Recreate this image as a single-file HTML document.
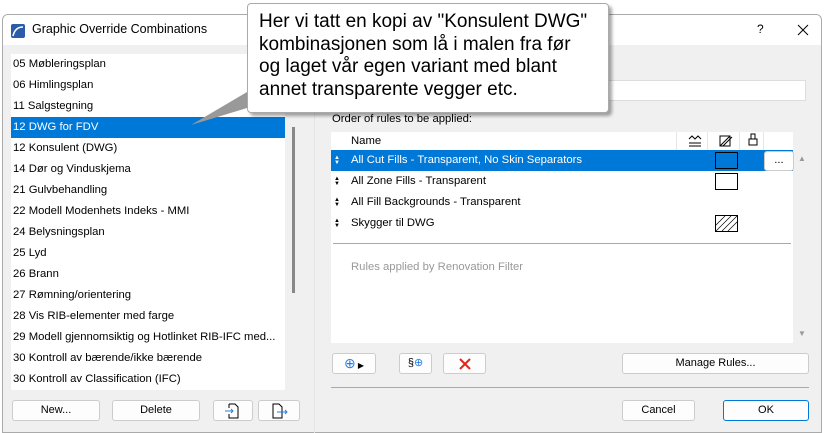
<!DOCTYPE html>
<html><head><meta charset="utf-8"><style>
*{box-sizing:border-box;margin:0;padding:0}
body{width:827px;height:433px;background:#fff;font-family:"Liberation Sans",sans-serif;font-size:11px;color:#000;position:relative;overflow:hidden}
.a{position:absolute}
.dlg{left:2px;top:14px;width:820px;height:419px;background:#f0f0f0;border:1px solid #aaa;border-radius:6px 6px 0 0;overflow:hidden}
.tb{left:0;top:0;width:820px;height:30px;background:#fff}
.li{position:absolute;left:0;width:274px;height:21px;line-height:21px;padding-left:2px;font-size:11.3px}
.sel{background:#0078d7;color:#fff}
.btn{position:absolute;background:#fdfdfd;border:1px solid #ccc;border-radius:3px;text-align:center;line-height:19px;font-size:11px}
.row{position:absolute;left:0;width:462px;height:21px;line-height:21px;font-size:11.3px}
.row .n{position:absolute;left:20px}
.row .ar{position:absolute;left:3px;font-size:6px;line-height:5px;top:6px}
</style></head><body>
<div class="a dlg">
 <div class="a tb"></div>
 <svg class="a" style="left:8px;top:9px" width="14" height="14"><rect width="14" height="14" rx="2" fill="#2a5caa"/><path d="M2 12 Q4 3 12 3" stroke="#fff" stroke-width="1.6" fill="none"/></svg>
 <div class="a" style="left:29px;top:7px;font-size:12.5px">Graphic Override Combinations</div>
 <div class="a" style="left:754px;top:7px;font-size:12px">?</div>
 <svg class="a" style="left:794px;top:9px" width="12" height="12"><path d="M1 1l10 10M11 1L1 11" stroke="#000" stroke-width="1"/></svg>
</div>
<div class="a" style="left:11px;top:54px;width:274px;height:336px;background:#fff">
 <div class="li" style="top:0">05 Møbleringsplan</div>
 <div class="li" style="top:21px">06 Himlingsplan</div>
 <div class="li" style="top:42px">11 Salgstegning</div>
 <div class="li sel" style="top:63px">12 DWG for FDV</div>
 <div class="li" style="top:84px">12 Konsulent (DWG)</div>
 <div class="li" style="top:105px">14 Dør og Vinduskjema</div>
 <div class="li" style="top:126px">21 Gulvbehandling</div>
 <div class="li" style="top:147px">22 Modell Modenhets Indeks - MMI</div>
 <div class="li" style="top:168px">24 Belysningsplan</div>
 <div class="li" style="top:189px">25 Lyd</div>
 <div class="li" style="top:210px">26 Brann</div>
 <div class="li" style="top:231px">27 Rømning/orientering</div>
 <div class="li" style="top:252px">28 Vis RIB-elementer med farge</div>
 <div class="li" style="top:273px">29 Modell gjennomsiktig og Hotlinket RIB-IFC med...</div>
 <div class="li" style="top:294px">30 Kontroll av bærende/ikke bærende</div>
 <div class="li" style="top:315px">30 Kontroll av Classification (IFC)</div>
</div>
<div class="a" style="left:292px;top:127px;width:3px;height:166px;background:#888"></div>
<div class="a" style="left:314px;top:45px;width:1px;height:388px;background:#e4e4e4"></div>
<div class="btn" style="left:12px;top:400px;width:88px;height:21px">New...</div>
<div class="btn" style="left:112px;top:400px;width:88px;height:21px">Delete</div>
<div class="btn" style="left:213px;top:400px;width:40px;height:21px"><svg width="20" height="18" style="margin-top:1px"><path d="M6 2h6l3 3v11H6v-4M6 6V2" stroke="#000" fill="none"/><path d="M2 9h8M8 7l2 2-2 2" stroke="#2a7de1" fill="none"/></svg></div>
<div class="btn" style="left:258px;top:400px;width:42px;height:21px"><svg width="20" height="18" style="margin-top:1px"><path d="M4 2h6l3 3v11H4z" stroke="#000" fill="none"/><path d="M8 10h10M16 8l2 2-2 2" stroke="#2a7de1" fill="none"/></svg></div>

<div class="a" style="left:330px;top:80px;width:476px;height:21px;background:#fff;border:1px solid #ddd"></div>
<div class="a" style="left:332px;top:113px;font-size:11.3px">Order of rules to be applied:</div>
<div class="a" style="left:331px;top:132px;width:462px;height:211px;background:#fff">
 <div class="a" style="left:20px;top:3px;font-size:11.3px">Name</div>
 <div class="a" style="left:345px;top:0;width:1px;height:18px;background:#e6e6e6"></div>
 <div class="a" style="left:376px;top:0;width:1px;height:18px;background:#e6e6e6"></div>
 <div class="a" style="left:408px;top:0;width:1px;height:18px;background:#e6e6e6"></div>
 <div class="a" style="left:432px;top:0;width:1px;height:18px;background:#e6e6e6"></div>
 <svg class="a" style="left:357px;top:3px" width="14" height="12"><path d="M1 4l3-3 3 3 3-3 3 3M1 8h12M1 11h12" stroke="#000" fill="none"/></svg>
 <svg class="a" style="left:388px;top:2px" width="14" height="14"><rect x="1" y="2" width="10" height="10" stroke="#000" fill="none"/><path d="M1 12l10-10M4 12l9-9" stroke="#000"/></svg>
 <svg class="a" style="left:416px;top:1px" width="12" height="14"><path d="M4 1h4v5H4zM2 6h8v6H2z" stroke="#000" fill="none"/></svg>
 <div class="row sel" style="top:18px"><span class="ar">▲<br>▼</span><span class="n">All Cut Fills - Transparent, No Skin Separators</span>
  <div class="a" style="left:384px;top:2px;width:23px;height:17px;border:1px solid #000"></div>
  <div class="a" style="left:433px;top:1px;width:30px;height:20px;background:#fff;border:1px solid #ccc;border-radius:3px;color:#000;text-align:center;line-height:16px">...</div></div>
 <div class="row" style="top:39px"><span class="ar">▲<br>▼</span><span class="n">All Zone Fills - Transparent</span>
  <div class="a" style="left:384px;top:2px;width:23px;height:17px;border:1px solid #000"></div></div>
 <div class="row" style="top:60px"><span class="ar">▲<br>▼</span><span class="n">All Fill Backgrounds - Transparent</span></div>
 <div class="row" style="top:81px"><span class="ar">▲<br>▼</span><span class="n">Skygger til DWG</span>
  <svg class="a" style="left:384px;top:2px" width="23" height="17"><rect x=".5" y=".5" width="22" height="16" stroke="#000" fill="#fff"/><path d="M1 16L16 1M7 16L22 1M-5 16L10 1M13 16L28 1" stroke="#000" stroke-width=".7"/></svg></div>
 <div class="a" style="left:2px;top:111px;width:458px;height:1px;background:#aaa"></div>
 <div class="a" style="left:20px;top:129px;color:#999;font-size:11.3px">Rules applied by Renovation Filter</div>
</div>
<div class="a" style="left:798px;top:154px;font-size:8px;color:#999">▲</div>
<div class="a" style="left:798px;top:329px;font-size:8px;color:#999">▼</div>
<div class="btn" style="left:332px;top:353px;width:44px;height:21px;color:#2a7de1;font-size:14px;line-height:18px">⊕<span style="color:#000;font-size:8px"> ▶</span></div>
<div class="btn" style="left:399px;top:353px;width:33px;height:21px;font-size:11px">§<span style="color:#2a7de1">⊕</span></div>
<div class="btn" style="left:443px;top:353px;width:43px;height:21px"><svg width="14" height="14" style="margin-top:3px"><path d="M2 2l10 10M12 2L2 12" stroke="#e0261b" stroke-width="2"/></svg></div>
<div class="btn" style="left:622px;top:353px;width:187px;height:21px">Manage Rules...</div>
<div class="a" style="left:331px;top:387px;width:478px;height:1px;background:#aaa"></div>
<div class="btn" style="left:622px;top:400px;width:73px;height:21px">Cancel</div>
<div class="btn" style="left:723px;top:400px;width:86px;height:21px;border-color:#0078d7">OK</div>

<svg class="a" style="left:185px;top:90px" width="80" height="45"><path d="M62 2L6 35L62 18z" fill="#999"/></svg>
<div class="a" style="left:247px;top:3px;width:362px;height:110px;background:#fff;border:1px solid #aaa;border-radius:4px;box-shadow:3px 3px 3px rgba(0,0,0,.35);font-size:19px;line-height:22.5px;padding:7px 0 0 11px;white-space:nowrap">Her vi tatt en kopi av "Konsulent DWG"<br>kombinasjonen som lå i malen fra før<br>og laget vår egen variant med blant<br>annet transparente vegger etc.</div>
</body></html>
